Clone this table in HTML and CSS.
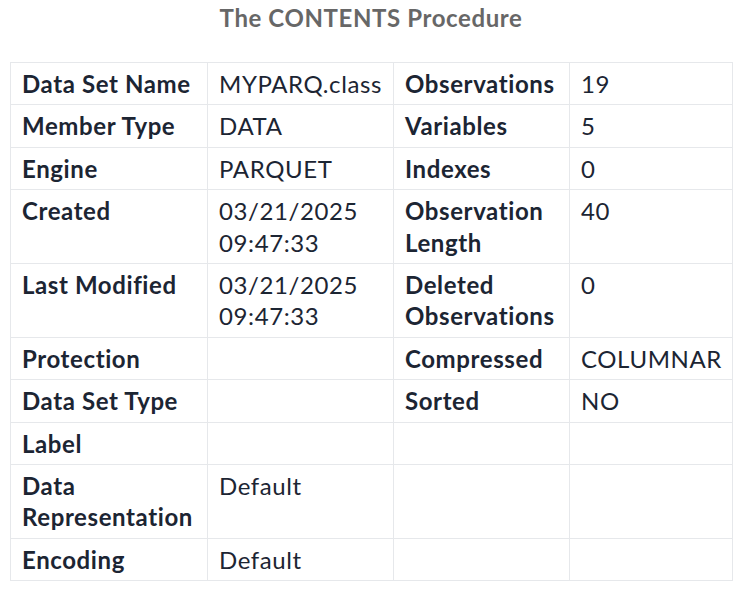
FILE: index.html
```html
<!DOCTYPE html>
<html>
<head>
<meta charset="utf-8">
<link rel="stylesheet" href="styles.css">
</head>
<body>
<h1 class="title">The CONTENTS Procedure</h1>
<table class="attrs">
<colgroup>
<col class="c1"><col class="c2"><col class="c3"><col class="c4">
</colgroup>
<tbody>
<tr><th>Data Set Name</th><td>MYPARQ.class</td><th>Observations</th><td>19</td></tr>
<tr><th>Member Type</th><td>DATA</td><th>Variables</th><td>5</td></tr>
<tr><th>Engine</th><td>PARQUET</td><th>Indexes</th><td>0</td></tr>
<tr><th>Created</th><td>03/21/2025<br>09:47:33</td><th>Observation Length</th><td>40</td></tr>
<tr><th>Last Modified</th><td>03/21/2025<br>09:47:33</td><th>Deleted Observations</th><td>0</td></tr>
<tr><th>Protection</th><td></td><th>Compressed</th><td>COLUMNAR</td></tr>
<tr><th>Data Set Type</th><td></td><th>Sorted</th><td>NO</td></tr>
<tr><th>Label</th><td></td><th></th><td></td></tr>
<tr><th>Data Representation</th><td>Default</td><th></th><td></td></tr>
<tr><th>Encoding</th><td>Default</td><th></th><td></td></tr>
</tbody>
</table>
</body>
</html>
```
FILE: styles.css
```css
html, body {
  margin: 0;
  padding: 0;
  background: #ffffff;
}
body {
  padding: 0 10px;
  font-family: Lato, "Open Sans", sans-serif;
  color: #1c2533;
}
.title {
  margin: 0;
  padding-top: 3px;
  height: 62px;
  box-sizing: border-box;
  text-align: center;
  font-size: 24px;
  line-height: 30px;
  letter-spacing: 0.6px;
  font-weight: 700;
  color: #676767;
}
.attrs {
  width: 722px;
  table-layout: fixed;
  border-collapse: collapse;
  font-size: 24px;
  line-height: 31.4px;
  letter-spacing: 0.6px;
}
.c1 { width: 197px; }
.c2 { width: 186px; }
.c3 { width: 176px; }
.c4 { width: 163px; }
.attrs th, .attrs td {
  border: 1px solid #e6e8eb;
  padding: 5px 10px 5px 11px;
  text-align: left;
  vertical-align: top;
}
.attrs th {
  font-weight: 700;
}
.attrs td {
  font-weight: 400;
}
```
